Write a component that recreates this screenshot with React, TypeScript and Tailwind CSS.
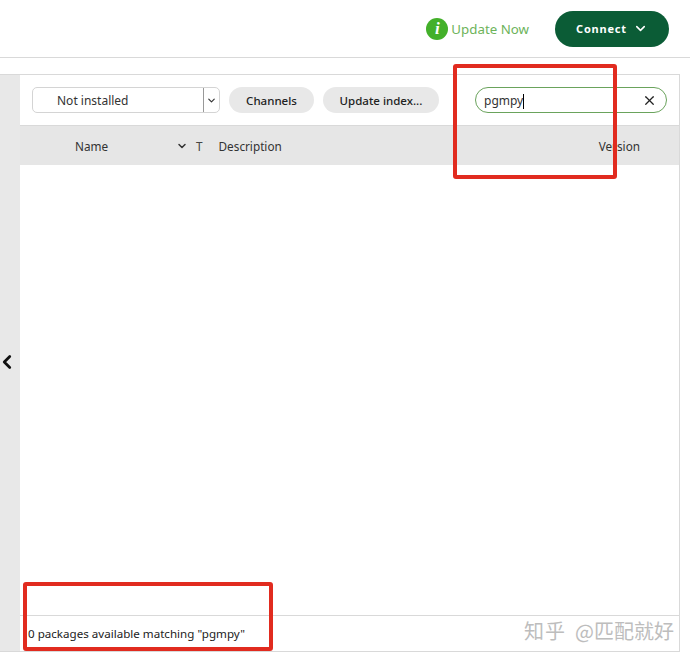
import { ChevronDown, ChevronLeft, X } from "lucide-react";

export default function App() {
  return (
    <div className="relative flex h-[660px] w-[690px] flex-col overflow-hidden bg-white font-['Noto_Sans',sans-serif] text-[#333]">
      {/* top bar */}
      <header className="flex h-[58px] items-center justify-end border-b border-[#d9d9d9] pr-[21px]">
        <div className="mr-[26px] flex items-center gap-[3px]">
          <span className="flex h-[22px] w-[22px] items-center justify-center rounded-full bg-[#43b02a] font-['Liberation_Serif',serif] text-[17px] font-bold italic text-white">
            i
          </span>
          <span className="pt-[3px] text-[13.3px] text-[#6db35a]">Update Now</span>
        </div>
        <button className="flex h-[36px] w-[114px] items-center justify-center gap-[6px] rounded-[18px] bg-[#0b5c36] text-[11px] font-bold tracking-[0.8px] text-white">
          <span className="pt-[1px]">Connect</span>
          <ChevronDown size={15} strokeWidth={2.5} />
        </button>
      </header>

      {/* navigator panel */}
      <div className="mt-[16px] flex h-[578px] w-[680px] border-y border-[#d9d9d9]">
        <aside className="flex w-[20px] shrink-0 items-center bg-[#e8e8e8]">
          <ChevronLeft size={22} strokeWidth={3} className="mt-[-2px] ml-[-4px] shrink-0 text-[#111]" />
        </aside>

        <main className="flex min-w-0 flex-1 flex-col border-r border-[#d9d9d9]">
          <div className="flex h-[50px] items-center pl-[12px] text-[12px]">
            <div className="flex h-[26px] w-[188px] items-center rounded-[5px] border border-[#d4d4d4]">
              <span className="flex-1 pt-[2px] pl-[24px]">Not installed</span>
              <span className="flex h-full w-[16px] items-center justify-center border-l border-[#999]">
                <ChevronDown size={11} strokeWidth={2.5} />
              </span>
            </div>
            <button className="ml-[9px] h-[26px] w-[85px] rounded-[13px] bg-[#e8e8e8] pt-[2px] text-[11.5px] font-medium text-[#222]">
              Channels
            </button>
            <button className="ml-[9px] h-[26px] w-[116px] rounded-[13px] bg-[#e8e8e8] pt-[2px] text-[11.5px] font-medium text-[#222]">
              Update index...
            </button>
            <div className="ml-[36px] flex h-[26px] w-[192px] items-center rounded-[13px] border border-[#6aa35c] pr-[9px] pl-[8px]">
              <span className="flex-1 pt-[2px] text-[12px] text-[#333]">
                pgmpy<span className="inline-block h-[15px] w-px bg-black align-middle" />
              </span>
              <X size={15} strokeWidth={2} className="text-[#222]" />
            </div>
          </div>

          <div className="flex h-[40px] items-center border-t border-[#d9d9d9] bg-[#e6e6e6] pt-[2px] text-[11.75px]">
            <span className="ml-[55px] w-[100px]">Name</span>
            <ChevronDown size={12} strokeWidth={3} className="mt-[-2px] ml-[1px]" />
            <span className="ml-[8px] text-[#444]">T</span>
            <span className="ml-[16px] flex-1">Description</span>
            <span className="mr-[39px]">Version</span>
          </div>

          <div className="flex-1" />

          <div className="flex h-[36px] items-center border-t border-[#d9d9d9] pl-[8px] text-[11.6px] text-[#222]">
            0 packages available matching "pgmpy"
          </div>
        </main>
      </div>

      {/* annotations over the screenshot */}
      <div className="absolute top-[64px] left-[453px] h-[115px] w-[164px] rounded-[3px] border-4 border-[#e12b1f]" />
      <div className="absolute top-[582px] left-[23px] h-[69px] w-[250px] rounded-[3px] border-4 border-[#e12b1f]" />

      {/* watermark */}
      <div className="absolute top-[618px] left-[524px] flex items-center gap-[9px] font-['Noto_Sans_CJK_SC',sans-serif] text-[20px] leading-[26px] text-[#bdbdbd]">
        <span className="tracking-[1px]">知乎</span>
        <span>@匹配就好</span>
      </div>
    </div>
  );
}
